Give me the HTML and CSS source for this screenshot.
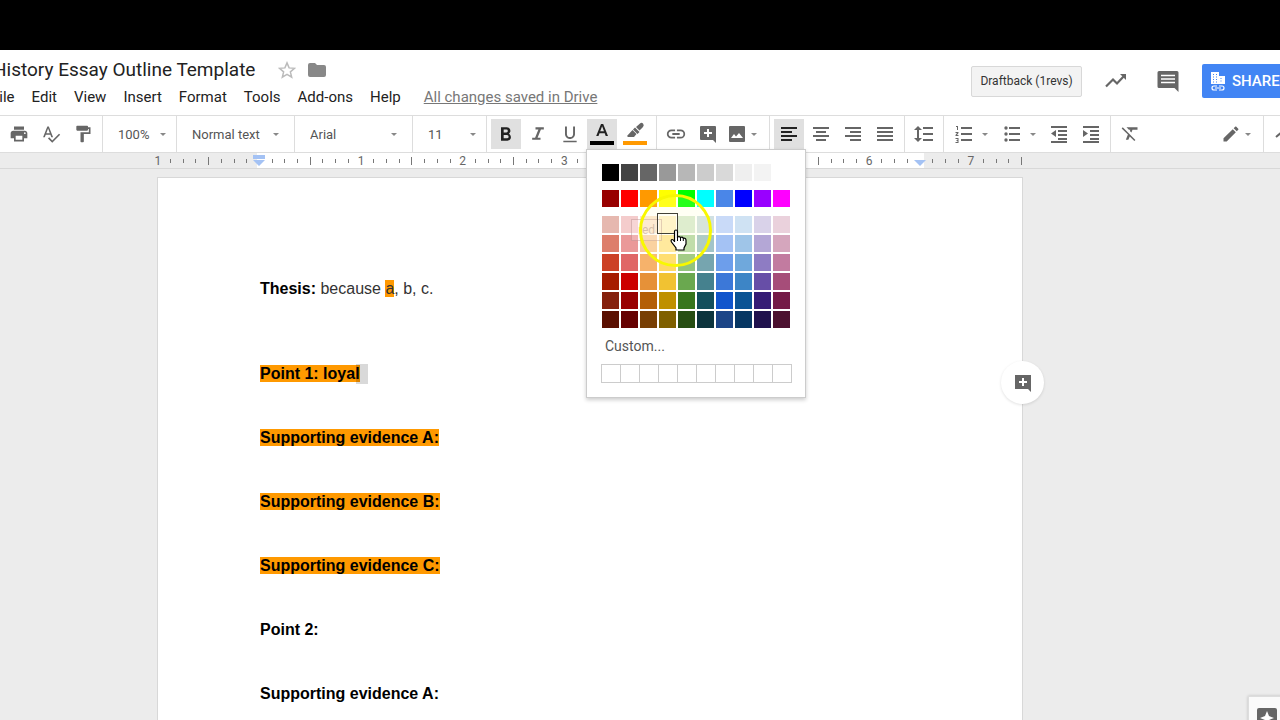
FILE: index.html
```html
<!DOCTYPE html>
<html lang="en">
<head>
    <meta charset="UTF-8">
    <meta name="viewport" content="width=device-width, initial-scale=1.0">
    <title>History Essay Outline Template</title>
    <link rel="stylesheet" href="styles.css">
</head>
<body>
    <div class="letterbox"></div>

    <header class="header">
        <div class="header-main">
            <div class="title-row">
                <h1>History Essay Outline Template</h1>
                <button type="button" class="plain" aria-label="Star">
                    <svg class="star" width="18" height="18" viewBox="0 0 24 24"><path d="M12 2.500l2.800 6.700 7.200.6-5.500 4.700 1.700 7L12 17.700 5.800 21.500l1.700-7L2 9.800l7.200-.6z"/></svg>
                </button>
                <button type="button" class="plain" aria-label="Move to folder">
                    <svg width="18" height="16" viewBox="0 0 18 16"><path d="M2 1h5l2 2h7q2 0 2 2v8q0 2-2 2H2q-2 0-2-2V3q0-2 2-2z" fill="#888"/></svg>
                </button>
            </div>
            <nav class="menubar">
                <button type="button">File</button>
                <button type="button">Edit</button>
                <button type="button">View</button>
                <button type="button">Insert</button>
                <button type="button">Format</button>
                <button type="button">Tools</button>
                <button type="button">Add-ons</button>
                <button type="button">Help</button>
                <a href="#" class="save-status">All changes saved in Drive</a>
            </nav>
        </div>
        <div class="header-actions">
            <button type="button" class="draftback">Draftback (1revs)</button>
            <button type="button" class="plain" aria-label="Activity">
                <svg width="24" height="24" viewBox="0 0 24 24"><path d="M2 17.500l7-7 4 4 7.500-8" fill="none" stroke="#666" stroke-width="2.200"/><path d="M16 5h6v6z" fill="#666"/></svg>
            </button>
            <button type="button" class="plain" aria-label="Comments">
                <svg width="24" height="24" viewBox="0 0 24 24"><path d="M3 2h18q1.500 0 1.500 1.500V23l-4-4H3q-1.500 0-1.500-1.500v-14Q1.500 2 3 2z" fill="#666"/><path d="M5 6.500h14M5 10h14M5 13.500h14" stroke="#fff" stroke-width="1.600"/></svg>
            </button>
            <button type="button" class="share">
                <svg width="16" height="20" viewBox="0 0 16 20"><path d="M1 1h8v4h6v8H1z" fill="#fff"/><path d="M3.500 3v9M6.500 3v9M11 7v5" stroke="#4285f4" stroke-width="1" stroke-dasharray="1 1.500"/><path d="M7 15H4q-2 0-2 2t2 2h3M9 15h3q2 0 2 2t-2 2H9M5 17h6" fill="none" stroke="#fff" stroke-width="1.200"/></svg>
                SHARE
            </button>
        </div>
    </header>

    <div class="toolbar">
        <div class="group">
            <button type="button" aria-label="Print"><svg width="20" height="20" viewBox="0 0 24 24"><path d="M19 8H5c-1.700 0-3 1.300-3 3v6h4v4h12v-4h4v-6c0-1.700-1.300-3-3-3zm-3 11H8v-5h8zm3-7a1 1 0 110-2 1 1 0 010 2zM18 3H6v4h12z"/></svg></button>
            <button type="button" aria-label="Spelling"><svg width="20" height="20" viewBox="0 0 24 24"><path d="M12.400 16h2.100L9.400 3H7.600L2.500 16h2.100l1.100-3h5.600zm-6-5l2.100-5.500L10.600 11zm15.200.6l-8.100 8.100L9.800 16l-1.400 1.400 5.100 5.100L23 13z"/></svg></button>
            <button type="button" aria-label="Paint format"><svg width="20" height="20" viewBox="0 0 24 24"><path d="M18 4V3q0-1-1-1H5Q4 2 4 3v4q0 1 1 1h12q1 0 1-1V6h1v4H9v11q0 1 1 1h2q1 0 1-1v-9h8V4z"/></svg></button>
        </div>
        <div class="group picker picker-zoom"><select aria-label="Zoom"><option>100%</option></select></div>
        <div class="group picker picker-style"><select aria-label="Styles"><option>Normal text</option></select></div>
        <div class="group picker picker-font"><select aria-label="Font"><option>Arial</option></select></div>
        <div class="group picker picker-size"><select aria-label="Font size"><option>11</option></select></div>
        <div class="group group-text">
            <button type="button" class="active" aria-label="Bold"><svg width="20" height="20" viewBox="0 0 24 24"><path d="M15.600 11.300c1-.7 1.700-1.800 1.700-2.900 0-2.500-1.800-4.400-4.300-4.400H6v16h7.800c2.300 0 4.100-1.900 4.100-4.200 0-1.700-.9-3.100-2.300-4.500zM9.200 6.700h3.300a1.700 1.700 0 010 3.400H9.200zm4 10.500h-4v-3.900h4a1.900 1.900 0 010 3.900z"/></svg></button>
            <button type="button" aria-label="Italic"><svg width="20" height="20" viewBox="0 0 24 24"><path d="M9 4v2.500h3.500L8.500 16.500H5V19h10v-2.500h-3.500l4-10H19V4z"/></svg></button>
            <button type="button" aria-label="Underline"><svg width="20" height="20" viewBox="0 0 24 24"><path d="M12 18c3.300 0 6-2.700 6-6V3h-2.300v9a3.700 3.700 0 01-7.400 0V3H6v9c0 3.300 2.700 6 6 6zM4 20v2h16v-2z"/></svg></button>
            <div class="color-picker">
                <button type="button" class="active" aria-label="Text color"><svg width="26" height="26" viewBox="0 0 26 26"><path d="M12 3h2.200l4.800 12h-2.300l-1-2.800h-5.200L9.500 15H7.200zm-.8 7.300h3.800L13.100 5.300z"/><path d="M1 20h24v4H1z" fill="#000"/></svg></button>
                <div class="color-menu">
                    <div class="swatches" id="grays"></div>
                    <div class="swatches" id="brights"></div>
                    <div class="swatches" id="shades"></div>
                    <button type="button" class="custom">Custom...</button>
                    <div class="custom-slots" id="customSlots"></div>
                    <span class="swatch-tip">red</span>
                    <span class="swatch-focus"></span>
                    <span class="click-ring"></span>
                    <svg class="pointer" width="17" height="22" viewBox="0 0 17 22"><path d="M4.500 13V2.500q0-1.500 1.500-1.500t1.500 1.500V8q2-1 3 .5 2-.8 2.800.8 2.700-.5 2.700 2V15l-2 4v2H6v-2l-4.500-6q-1-2 .5-2.500 1-.2 2.500 2z" fill="#fff" stroke="#000" stroke-width="1.200"/><path d="M7.500 8v4M10.500 8.500V12M13.300 9.500V12" stroke="#000"/></svg>
                </div>
            </div>
            <button type="button" aria-label="Highlight color"><svg width="26" height="26" viewBox="0 0 26 26"><path d="M19 2.500q1.500-1.500 3 0t0 3.500l-3.500 3.500-3.500-3.500zM14 6.500l4.500 4.500-2 2-4.500-4.500zM11.500 9l4 4-2.500 3H7l-1-1z"/><path d="M2 20h24v4H2z" fill="#f90"/></svg></button>
        </div>
        <div class="group">
            <button type="button" aria-label="Insert link"><svg width="22" height="22" viewBox="0 0 24 24"><path d="M3.900 12c0-1.700 1.400-3.100 3.100-3.100h4V7H7a5 5 0 000 10h4v-1.900H7c-1.700 0-3.100-1.400-3.100-3.100zM8 13h8v-2H8zm9-6h-4v1.900h4a3.100 3.100 0 010 6.200h-4V17h4a5 5 0 000-10z"/></svg></button>
            <button type="button" aria-label="Add comment"><svg width="20" height="20" viewBox="0 0 20 20"><path d="M3 2h14q1 0 1 1v16l-3-3H3q-1 0-1-1V3q0-1 1-1z"/><path d="M10 5v8M6 9h8" stroke="#fff" stroke-width="2"/></svg></button>
            <button type="button" class="with-menu tight" aria-label="Insert image"><svg width="20" height="20" viewBox="0 0 20 20"><path d="M3 2h14q1 0 1 1v14q0 1-1 1H3q-1 0-1-1V3q0-1 1-1z"/><path d="M4 14l3-4 2 2.500L12 9l4 5z" fill="#fff"/></svg></button>
        </div>
        <div class="group">
            <button type="button" class="active" aria-label="Align left"><svg width="20" height="20" viewBox="0 0 20 20"><path d="M2 3h16v2H2zM2 7h11v2H2zM2 11h16v2H2zM2 15h11v2H2z"/></svg></button>
            <button type="button" aria-label="Align center"><svg width="20" height="20" viewBox="0 0 20 20"><path d="M2 3h16v2H2zM5 7h10v2H5zM2 11h16v2H2zM5 15h10v2H5z"/></svg></button>
            <button type="button" aria-label="Align right"><svg width="20" height="20" viewBox="0 0 20 20"><path d="M2 3h16v2H2zM7 7h11v2H7zM2 11h16v2H2zM7 15h11v2H7z"/></svg></button>
            <button type="button" aria-label="Justify"><svg width="20" height="20" viewBox="0 0 20 20"><path d="M2 3h16v2H2zM2 7h16v2H2zM2 11h16v2H2zM2 15h16v2H2z"/></svg></button>
        </div>
        <div class="group">
            <button type="button" aria-label="Line spacing"><svg width="20" height="20" viewBox="0 0 20 20"><path d="M9 3h10v2H9zM9 9h10v2H9zM9 15h10v2H9zM4 2l4 4H5v8h3l-4 4-4-4h3V6H0z"/></svg></button>
        </div>
        <div class="group">
            <button type="button" class="with-menu" aria-label="Numbered list"><svg width="20" height="20" viewBox="0 0 20 20"><path d="M7 3h11v2H7zM7 9h11v2H7zM7 15h11v2H7zM2 2h2v4H3V3H2zM1.500 8h3v1L3 11h1.500v1h-3v-1L3 9H1.500zM1.500 14h3v5h-3v-1h2v-1h-1v-1h1v-1h-2z"/></svg></button>
            <button type="button" class="with-menu" aria-label="Bulleted list"><svg width="20" height="20" viewBox="0 0 20 20"><path d="M7 3h11v2H7zM7 9h11v2H7zM7 15h11v2H7z"/><circle cx="4" cy="4" r="1.700"/><circle cx="4" cy="10" r="1.700"/><circle cx="4" cy="16" r="1.700"/></svg></button>
            <button type="button" aria-label="Decrease indent"><svg width="20" height="20" viewBox="0 0 20 20"><path d="M2 2h16v2H2zM9 6h9v2H9zM9 10h9v2H9zM9 14h9v2H9zM2 17h16v2H2zM7 6v7L2 9.500z"/></svg></button>
            <button type="button" aria-label="Increase indent"><svg width="20" height="20" viewBox="0 0 20 20"><path d="M2 2h16v2H2zM9 6h9v2H9zM9 10h9v2H9zM9 14h9v2H9zM2 17h16v2H2zM2 6v7l5-3.500z"/></svg></button>
        </div>
        <div class="group group-last">
            <button type="button" aria-label="Clear formatting"><svg width="20" height="20" viewBox="0 0 24 24"><path d="M6 4h15v3h-6l-1.300 3.200-1.900-1.900.6-1.300h-1.700L7.800 4zM3.300 4L2 5.300l7.500 7.400L7 19h3l1.700-4.100L17.200 20.500l1.300-1.300z"/></svg></button>
        </div>
        <div class="group group-mode">
            <button type="button" class="with-menu tight" aria-label="Editing mode"><svg width="20" height="20" viewBox="0 0 24 24"><path d="M3 17.200V21h3.800L17.800 9.900l-3.700-3.700zM20.700 7c.4-.4.4-1 0-1.400l-2.300-2.300c-.4-.4-1-.4-1.400 0l-1.800 1.800 3.700 3.700z"/></svg></button>
        </div>
        <div class="group group-last">
            <button type="button" aria-label="Hide menus"><svg width="20" height="20" viewBox="0 0 20 20"><path d="M3 13l7-6 7 6" fill="none" stroke="#666" stroke-width="2"/></svg></button>
        </div>
    </div>

    <div class="ruler-bar">
        <div class="ruler" id="ruler"></div>
    </div>

    <main class="canvas">
        <article class="page">
            <p class="lead"><b>Thesis:</b> because <mark>a</mark>, b, c.</p>
            <p><b><mark>Point 1: loyal</mark></b><span class="selection"></span></p>
            <p><b><mark>Supporting evidence A:</mark></b></p>
            <p><b><mark>Supporting evidence B:</mark></b></p>
            <p><b><mark>Supporting evidence C:</mark></b></p>
            <p><b>Point 2:</b></p>
            <p><b>Supporting evidence A:</b></p>
            <button type="button" class="add-comment" aria-label="Add a comment">
                <svg width="20" height="20" viewBox="0 0 20 20"><path d="M2 2h16v17l-3-3H2z" fill="#666"/><path d="M10 5v8M6 9h8" stroke="#fff" stroke-width="2"/></svg>
            </button>
        </article>
        <button type="button" class="explore" aria-label="Explore">
            <svg width="20" height="20" viewBox="0 0 20 20"><path d="M2 0h16q2 0 2 2v16q0 2-2 2H2q-2 0-2-2V2q0-2 2-2z" fill="#666"/><path d="M10 3l2 5 5 2-5 2-2 5-2-5-5-2 5-2z" fill="#fff"/></svg>
        </button>
    </main>

    <script src="script.js"></script>
</body>
</html>
```

FILE: styles.css
```css
* {
    box-sizing: border-box;
}
body {
    margin: 0;
    height: 100vh;
    display: flex;
    flex-direction: column;
    overflow: hidden;
    font-family: Roboto, Arial, sans-serif;
    font-size: 15px;
    color: #222;
    background-color: #fff;
}
button {
    padding: 0;
    border: none;
    background: none;
    font-family: inherit;
    color: inherit;
    cursor: pointer;
}
svg {
    display: block;
}
.letterbox {
    flex: none;
    height: 50px;
    background-color: #000;
}

/* Header: runs past both window edges */
.header {
    flex: none;
    display: flex;
    justify-content: space-between;
    height: 65px;
    margin: 0 -22px 0 -9px;
}
.header-main {
    padding-top: 8px;
}
.title-row {
    display: flex;
    align-items: center;
    gap: 12px;
    height: 24px;
    padding-left: 2px;
}
h1 {
    margin: 0 11px 0 0;
    font-size: 19px;
    font-weight: 400;
    line-height: 24px;
}
.star {
    fill: none;
    stroke: #bbb;
    stroke-width: 2;
}
.menubar {
    display: flex;
    align-items: center;
    gap: 17px;
    height: 30px;
}
.menubar button {
    font-size: 15px;
}
.save-status {
    margin-left: 6px;
    color: #777;
}
.header-actions {
    display: flex;
    align-items: center;
    padding: 0 10px 3px 0;
    gap: 16px;
}
.header-actions .plain {
    width: 36px;
    display: flex;
    justify-content: center;
}
.draftback {
    height: 31px;
    width: 111px;
    border: 1px solid #d8d8d8;
    border-radius: 2px;
    background-color: #f3f3f3;
    font-size: 12px;
    color: #333;
}
.share {
    display: flex;
    align-items: center;
    gap: 6px;
    width: 90px;
    height: 34px;
    padding-left: 8px;
    border-radius: 2px;
    background-color: #4285f4;
    color: #fff;
    font-size: 15px;
    font-weight: 500;
}

/* Toolbar */
.toolbar {
    flex: none;
    display: flex;
    height: 38px;
    margin-right: -22px;
    border-top: 1px solid #ddd;
    border-bottom: 1px solid #ddd;
    fill: #666;
}
.group {
    flex: none;
    display: flex;
    align-items: center;
    gap: 2px;
    padding: 0 4px;
    border-right: 1px solid #ddd;
}
.group button {
    display: flex;
    align-items: center;
    justify-content: center;
    width: 30px;
    height: 30px;
}
.group .active {
    background-color: #e0e0e0;
    fill: #222;
}
.group-text {
    padding-right: 7px;
}
.group-last {
    border-right: none;
}
.group-mode {
    margin-left: auto;
}
.group .with-menu {
    justify-content: flex-start;
    gap: 8px;
    width: 46px;
    padding-left: 6px;
}
.group .tight {
    gap: 4px;
    width: 40px;
    padding-left: 2px;
}
.with-menu::after,
.picker::after {
    content: "";
    border: 3px solid transparent;
    border-top-color: #888;
    border-bottom: none;
}
.picker {
    position: relative;
    padding: 0;
}
.picker::after {
    position: absolute;
    right: 15px;
    pointer-events: none;
}
.picker-zoom::after,
.picker-size::after {
    right: 10px;
}
.picker select {
    appearance: none;
    width: 100%;
    height: 30px;
    padding: 0 20px 0 15px;
    border: none;
    background: none;
    font-family: inherit;
    font-size: 13px;
    color: #555;
}
.picker-zoom,
.picker-size {
    width: 74px;
}
.picker-style,
.picker-font {
    width: 118px;
}

/* Text color menu */
.color-picker {
    position: relative;
}
.color-menu {
    position: absolute;
    z-index: 2;
    top: 100%;
    left: -1px;
    width: 220px;
    padding: 14px;
    border: 1px solid #ccc;
    background-color: #fff;
    box-shadow: 0 2px 4px rgba(0, 0, 0, 0.2);
}
.swatches {
    display: grid;
    grid-template-columns: repeat(10, 17px);
    justify-content: center;
    gap: 2px;
    margin-bottom: 9px;
}
.swatches button {
    width: 17px;
    height: 17px;
}
#shades {
    margin-bottom: 0;
}
.color-menu .custom {
    justify-content: flex-start;
    width: 100%;
    height: 36px;
    padding-left: 4px;
    font-size: 14px;
    color: #555;
}
.custom-slots {
    display: flex;
    width: 191px;
    border-left: 1px solid #ccc;
}
.custom-slots button {
    width: 19px;
    height: 19px;
    border: 1px solid #ccc;
    border-left: none;
}
.swatch-tip {
    position: absolute;
    top: 69px;
    left: 44px;
    width: 31px;
    height: 22px;
    border: 1px solid rgba(150, 100, 100, 0.3);
    background-color: rgba(255, 235, 235, 0.3);
    font-size: 12px;
    line-height: 20px;
    text-align: center;
    color: rgba(120, 80, 80, 0.35);
}
.swatch-focus {
    position: absolute;
    top: 63px;
    left: 70px;
    width: 21px;
    height: 21px;
    border: 1px solid #222;
}
.click-ring {
    position: absolute;
    top: 44px;
    left: 52px;
    width: 73px;
    height: 73px;
    border: 3px solid #f8f800;
    border-radius: 50%;
    background-color: rgba(255, 255, 180, 0.15);
}
.pointer {
    position: absolute;
    top: 79px;
    left: 83px;
}

/* Ruler: 8.5 inches, one tick each eighth */
.ruler-bar {
    flex: none;
    display: flex;
    justify-content: center;
    height: 16px;
    padding-right: 100px;
    border-bottom: 1px solid #d8d8d8;
    background-color: #ececec;
}
.ruler {
    display: flex;
    align-items: center;
    width: 877px;
    background: linear-gradient(90deg, transparent 12%, #fff 12%, #fff 88%, transparent 88%);
}
.tick {
    flex: 1;
    display: flex;
    justify-content: center;
    font-size: 12px;
    line-height: 14px;
    color: #666;
}
.tick::before {
    content: "";
    width: 1px;
    height: 4px;
    background-color: #777;
}
.tick.half::before {
    height: 8px;
}
.tick.inch::before,
.tick.marker::before {
    display: none;
}
.tick svg {
    flex: none;
    fill: #a4c2f4;
}

/* Document */
.canvas {
    position: relative;
    flex: 1;
    display: flex;
    justify-content: center;
    min-height: 0;
    padding: 8px 100px 0 0;
    background-color: #ececec;
}
.page {
    position: relative;
    width: 866px;
    padding: 101px 102px 0;
    border: 1px solid #d8d8d8;
    border-bottom: none;
    background-color: #fff;
    font-family: "Liberation Sans", Arial, sans-serif;
    font-size: 16px;
    line-height: 20px;
    color: #000;
}
.page p {
    margin: 0 0 44px;
}
.page .lead {
    margin-bottom: 65px;
    color: #333;
}
.lead b {
    color: #000;
}
mark {
    background-color: #f90;
    color: inherit;
}
.selection {
    display: inline-block;
    width: 12px;
    height: 20px;
    margin-left: -4px;
    background-color: rgba(0, 0, 0, 0.15);
    vertical-align: top;
}
.add-comment {
    position: absolute;
    top: 183px;
    right: -22px;
    display: flex;
    align-items: center;
    justify-content: center;
    width: 43px;
    height: 43px;
    border-radius: 50%;
    background-color: #fff;
    box-shadow: 0 1px 3px rgba(0, 0, 0, 0.12);
}
.explore {
    position: absolute;
    right: -12px;
    bottom: -20px;
    width: 44px;
    height: 44px;
    padding: 8px;
    border: 1px solid #ddd;
    background-color: #fafafa;
    box-shadow: 0 0 3px rgba(0, 0, 0, 0.2);
}
```

FILE: script.js
```javascript
const palette = {
    grays: '#000000 #434343 #666666 #999999 #b7b7b7 #cccccc #d9d9d9 #efefef #f3f3f3 #ffffff',
    brights: '#980000 #ff0000 #ff9900 #ffff00 #00ff00 #00ffff #4a86e8 #0000ff #9900ff #ff00ff',
    shades: '#e6b8af #f4cccc #fce5cd #fff2cc #d9ead3 #d0e0e3 #c9daf8 #cfe2f3 #d9d2e9 #ead1dc ' +
        '#dd7e6b #ea9999 #f9cb9c #ffe599 #b6d7a8 #a2c4c9 #a4c2f4 #9fc5e8 #b4a7d6 #d5a6bd ' +
        '#cc4125 #e06666 #f6b26b #ffd966 #93c47d #76a5af #6d9eeb #6fa8dc #8e7cc3 #c27ba0 ' +
        '#a61c00 #cc0000 #e69138 #f1c232 #6aa84f #45818e #3c78d8 #3d85c6 #674ea7 #a64d79 ' +
        '#85200c #990000 #b45f06 #bf9000 #38761d #134f5c #1155cc #0b5394 #351c75 #741b47 ' +
        '#5b0f00 #660000 #783f04 #7f6000 #274e13 #0c343d #1c4587 #073763 #20124d #4c1130'
};

for (const id in palette) {
    const box = document.getElementById(id);
    palette[id].split(' ').forEach(color => {
        const swatch = document.createElement('button');
        swatch.type = 'button';
        swatch.style.backgroundColor = color;
        swatch.setAttribute('aria-label', color);
        box.appendChild(swatch);
    });
}

// Empty slots for custom colors
for (let i = 0; i < 10; i++) {
    const slot = document.createElement('button');
    slot.type = 'button';
    slot.setAttribute('aria-label', 'Custom color');
    document.getElementById('customSlots').appendChild(slot);
}

// Ruler: the left margin sits at one inch, the right one at 7.5 inches
const ruler = document.getElementById('ruler');
for (let i = 0; i <= 68; i++) {
    const tick = document.createElement('span');
    tick.className = 'tick';
    if (i === 8) {
        tick.classList.add('marker');
        tick.innerHTML = '<svg width="12" height="12" viewBox="0 0 12 12"><path d="M0 0h12v4H0zM0 5h12l-6 6z"/></svg>';
    } else if (i === 60) {
        tick.classList.add('marker');
        tick.innerHTML = '<svg width="12" height="12" viewBox="0 0 12 12"><path d="M0 5h12l-6 6z"/></svg>';
    } else if (i % 8 === 0) {
        tick.classList.add('inch');
        tick.textContent = Math.abs(i / 8 - 1);
    } else if (i % 4 === 0) {
        tick.classList.add('half');
    }
    ruler.appendChild(tick);
}
```
